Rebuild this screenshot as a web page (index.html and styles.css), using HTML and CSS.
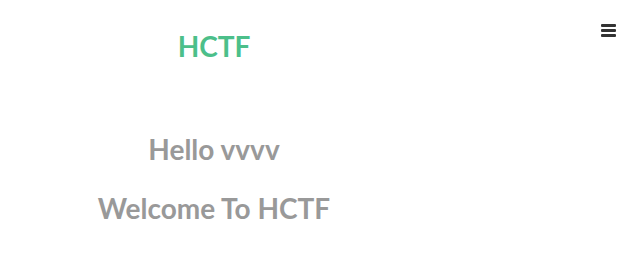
FILE: index.html
```html
<!DOCTYPE html>
<html>
<head>
<meta charset="utf-8">
<link rel="stylesheet" href="styles.css">
</head>
<body>
<div class="page">
  <div class="main">
    <div class="brand">HCTF</div>
    <div class="hello">Hello vvvv</div>
    <div class="welcome">Welcome To HCTF</div>
  </div>
  <div class="side">
    <span class="menu"><span></span><span></span><span></span></span>
  </div>
</div>
</body>
</html>
```
FILE: styles.css
```css
html, body { margin: 0; padding: 0; background: #fff; }
body { font-family: Lato, "Liberation Sans", sans-serif; }
.page { display: flex; width: 639px; height: 263px; }
.main { width: 428px; display: flex; flex-direction: column; align-items: center; font-weight: bold; }
.brand { color: #4cbf8a; font-size: 28px; line-height: 34px; margin-top: 29px; }
.hello { color: #999; font-size: 28px; line-height: 34px; margin-top: 69px; }
.welcome { color: #999; font-size: 28px; line-height: 34px; margin-top: 25px; }
.side { flex: 1; display: flex; justify-content: flex-end; }
.menu { display: flex; flex-direction: column; gap: 2px; margin-top: 24px; margin-right: 23px; width: 15px; }
.menu span { display: block; height: 3px; background: #333; border-radius: 1px; }
```
